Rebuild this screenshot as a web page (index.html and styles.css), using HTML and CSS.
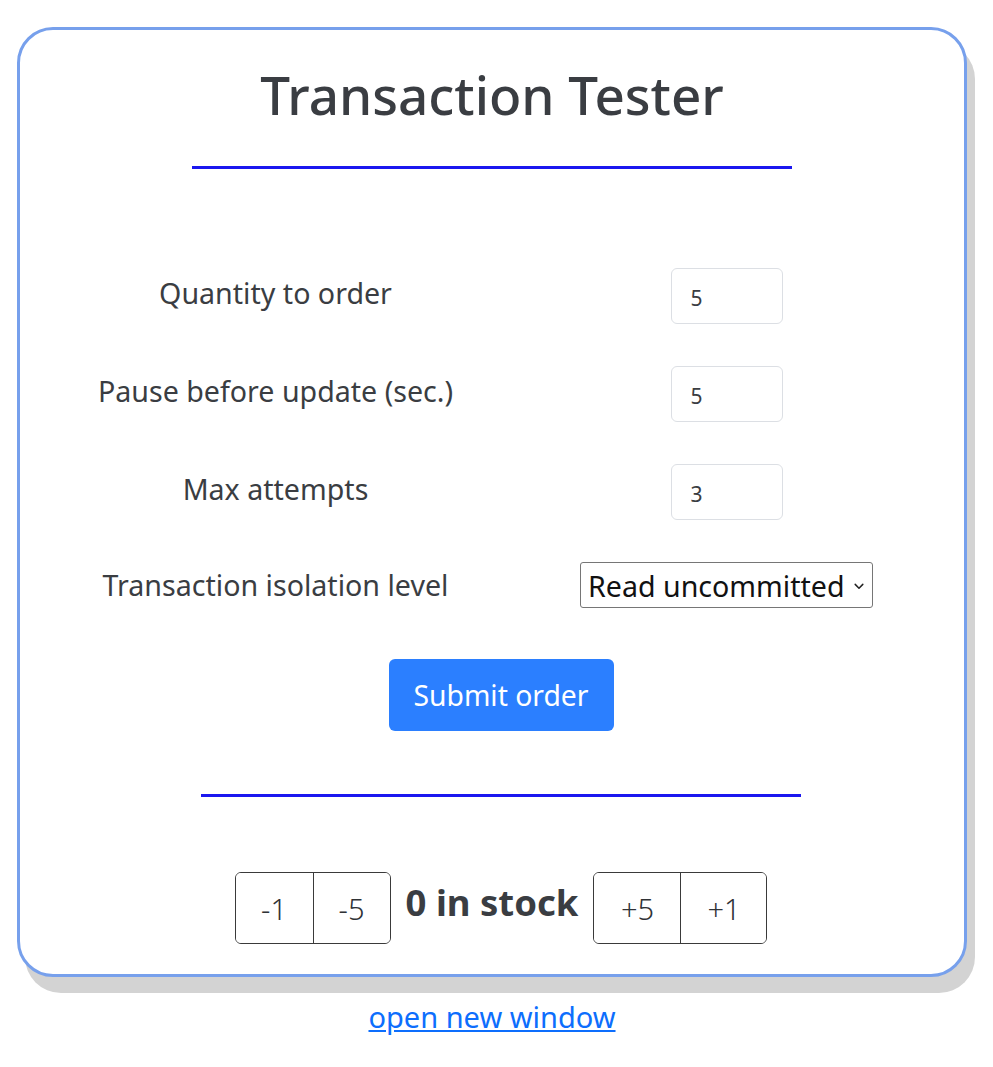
FILE: index.html
```html
<!DOCTYPE html>
<html lang="en">
<head>
<meta charset="utf-8">
<title>Transaction Tester</title>
<link rel="stylesheet" href="styles.css">
</head>
<body>
<main class="page">
  <section class="card">
    <h1 class="title">Transaction Tester</h1>
    <hr class="rule rule-top">
    <div class="content">
      <form class="form">
        <label class="label" for="qty">Quantity to order</label>
        <div class="field"><input class="num" id="qty" type="text" value="5"></div>

        <label class="label" for="pause">Pause before update (sec.)</label>
        <div class="field"><input class="num" id="pause" type="text" value="5"></div>

        <label class="label" for="attempts">Max attempts</label>
        <div class="field"><input class="num" id="attempts" type="text" value="3"></div>

        <label class="label label-select" for="iso">Transaction isolation level</label>
        <div class="field">
          <span class="select-wrap">
            <select class="select" id="iso">
              <option>Read uncommitted</option>
              <option>Read committed</option>
              <option>Repeatable read</option>
              <option>Serializable</option>
            </select>
            <svg class="chev" width="10" height="7" viewBox="0 0 10 7" aria-hidden="true"><path d="M1.2 1.4 L5 5.2 L8.8 1.4" fill="none" stroke="#222" stroke-width="1.5" stroke-linecap="round" stroke-linejoin="round"/></svg>
          </span>
        </div>
      </form>
      <div class="submit-row"><button class="submit" type="button">Submit order</button></div>
      <hr class="rule rule-bottom">
      <div class="stock-row">
        <div class="btn-group">
          <button class="step" type="button">-1</button>
          <button class="step" type="button">-5</button>
        </div>
        <span class="stock">0 in stock</span>
        <div class="btn-group">
          <button class="step step-plus" type="button">+5</button>
          <button class="step step-plus" type="button">+1</button>
        </div>
      </div>
    </div>
  </section>
  <div class="link-row"><a class="link" href="#">open new window</a></div>
</main>
</body>
</html>
```

FILE: styles.css
```css
html, body {
  margin: 0;
  padding: 0;
  background: #ffffff;
}

body {
  font-family: "Noto Sans", "Open Sans", sans-serif;
  color: #3a3d42;
}

.page {
  padding: 27px 0 0 17px;
}

.card {
  box-sizing: border-box;
  width: 950px;
  height: 950px;
  border: 3px solid #77a0ec;
  border-radius: 36px;
  box-shadow: 8px 16px 0 #d3d3d3;
  background: #ffffff;
  padding-top: 31px;
}

.title {
  margin: 0;
  text-align: center;
  font-size: 53px;
  font-weight: 500;
  line-height: 67px;
  color: #3a3d42;
}

.rule {
  border: 0;
  height: 3px;
  width: 600px;
  margin: 0 auto;
  background: #1b17ef;
}

.rule-top {
  margin-top: 38px;
}

.content {
  margin: 99px 12px 0 30px;
}

.form {
  display: grid;
  grid-template-columns: 1fr 1fr;
  row-gap: 42px;
  align-items: center;
  justify-items: center;
}

.label {
  font-size: 28.6px;
  line-height: 1.2;
  color: #3a3d42;
  margin-top: -6px;
}

.label-select {
  margin-top: 0;
}

.num {
  box-sizing: border-box;
  width: 112px;
  height: 56px;
  border: 1px solid #dcdfe4;
  border-radius: 6px;
  padding: 4px 0 0 19px;
  font-family: "Noto Sans", sans-serif;
  font-size: 21px;
  color: #3a3d42;
  background: #ffffff;
  outline: none;
}

.select-wrap {
  box-sizing: border-box;
  display: inline-flex;
  align-items: center;
  width: 293px;
  height: 46px;
  border: 1px solid #767676;
  border-radius: 3px;
  padding: 0 8px 0 7px;
  background: #ffffff;
}

.select {
  -webkit-appearance: none;
  appearance: none;
  border: 0;
  outline: none;
  background: transparent;
  padding: 0;
  margin: 0;
  flex: 1;
  min-width: 0;
  font-family: "Noto Sans", sans-serif;
  font-size: 28.6px;
  color: #111111;
}

.chev {
  flex: none;
  margin-top: 2px;
}

.submit-row {
  display: flex;
  justify-content: center;
  margin-top: 51px;
}

.submit {
  width: 225px;
  height: 72px;
  border: 0;
  border-radius: 6px;
  background: #2b7fff;
  color: #ffffff;
  font-family: "Noto Sans", sans-serif;
  font-size: 28.3px;
  padding: 0;
}

.rule-bottom {
  margin-top: 63px;
}

.stock-row {
  display: flex;
  justify-content: center;
  align-items: center;
  gap: 15px;
  margin-top: 75px;
}

.btn-group {
  display: flex;
  border: 1px solid #3a3a3a;
  border-radius: 6px;
  overflow: hidden;
  height: 72px;
  box-sizing: border-box;
}

.step {
  border: 0;
  background: #ffffff;
  font-family: "Noto Sans", sans-serif;
  font-size: 29px;
  font-weight: 300;
  color: #2f3236;
  width: 77px;
  padding: 0;
}

.step + .step {
  border-left: 1px solid #3a3a3a;
}

.step-plus {
  width: 86px;
}

.stock {
  font-size: 36.5px;
  font-weight: 700;
  color: #3a3d42;
  margin-top: -12px;
}

.link-row {
  text-align: center;
  width: 950px;
  margin-top: 20px;
}

.link {
  font-size: 29px;
  color: #0d6efd;
  text-decoration: underline;
}
```
